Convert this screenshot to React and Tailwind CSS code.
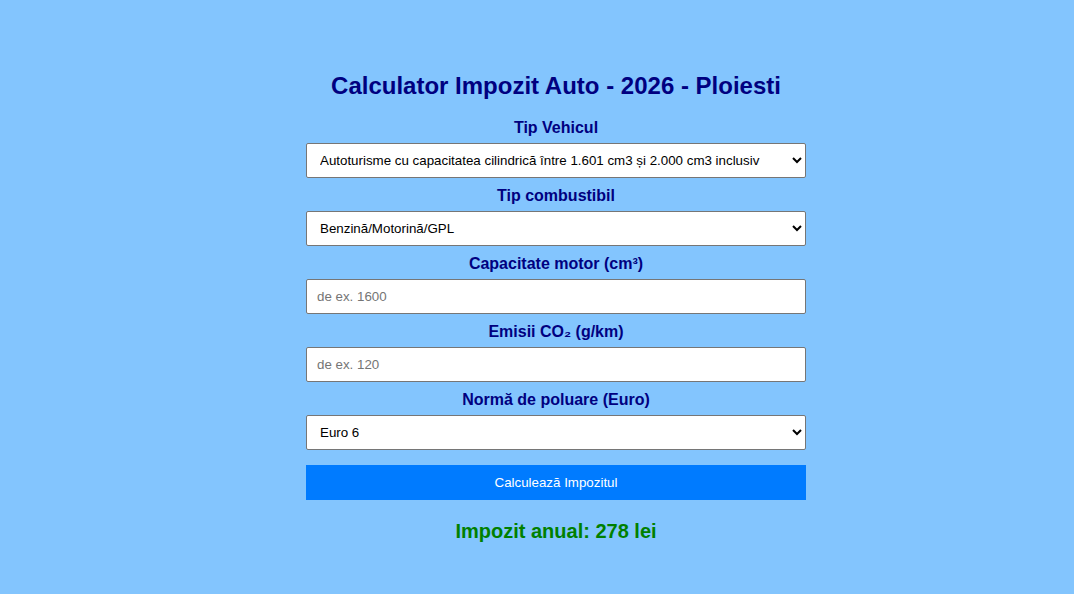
import React, { useState } from 'react';

const font = { fontFamily: '"Liberation Sans", Arial, sans-serif' };

const Label = ({ children, first }) => (
  <label className={`block text-center text-[16px] leading-[18px] font-bold text-[#000080] ${first ? 'mt-[19px]' : 'mt-[9px]'} mb-[6px]`}>
    {children}
  </label>
);

const fieldClass = "block w-full h-[35px] bg-white border border-[#767676] rounded-[2px] text-[13.33px] text-black outline-none";

export default function App() {
  const [vehicul, setVehicul] = useState('a2');
  const [combustibil, setCombustibil] = useState('b');
  const [euro, setEuro] = useState('6');

  return (
    <div className="min-h-screen bg-[#83c5fe] pt-[72px] pl-[38px] flex justify-center" style={font}>
      <div className="w-[500px]">
        <h1 className="text-center text-[24px] leading-[28px] font-bold text-[#000080]">
          Calculator Impozit Auto - 2026 - Ploiesti
        </h1>

        <Label first>Tip Vehicul</Label>
        <select value={vehicul} onChange={(e) => setVehicul(e.target.value)} className={`${fieldClass} px-[9px]`}>
          <option value="a1">Autoturisme cu capacitatea cilindrică de până la 1.600 cm3 inclusiv</option>
          <option value="a2">Autoturisme cu capacitatea cilindrică între 1.601 cm3 și 2.000 cm3 inclusiv</option>
          <option value="a3">Autoturisme cu capacitatea cilindrică între 2.001 cm3 și 2.600 cm3 inclusiv</option>
        </select>

        <Label>Tip combustibil</Label>
        <select value={combustibil} onChange={(e) => setCombustibil(e.target.value)} className={`${fieldClass} px-[9px]`}>
          <option value="b">Benzină/Motorină/GPL</option>
          <option value="h">Hibrid</option>
          <option value="e">Electric</option>
        </select>

        <Label>Capacitate motor (cm³)</Label>
        <input type="number" placeholder="de ex. 1600" className={`${fieldClass} px-[10px] placeholder:text-[#757575]`} />

        <Label>Emisii CO₂ (g/km)</Label>
        <input type="number" placeholder="de ex. 120" className={`${fieldClass} px-[10px] placeholder:text-[#757575]`} />

        <Label>Normă de poluare (Euro)</Label>
        <select value={euro} onChange={(e) => setEuro(e.target.value)} className={`${fieldClass} px-[9px]`}>
          <option value="4">Euro 4</option>
          <option value="5">Euro 5</option>
          <option value="6">Euro 6</option>
        </select>

        <button className="block w-full h-[35px] mt-[15px] bg-[#007bff] text-white text-[13.33px]">
          Calculează Impozitul
        </button>

        <div className="mt-[19px] text-center text-[20px] leading-[24px] font-bold text-[#008000]">
          Impozit anual: 278 lei
        </div>
      </div>
    </div>
  );
}
